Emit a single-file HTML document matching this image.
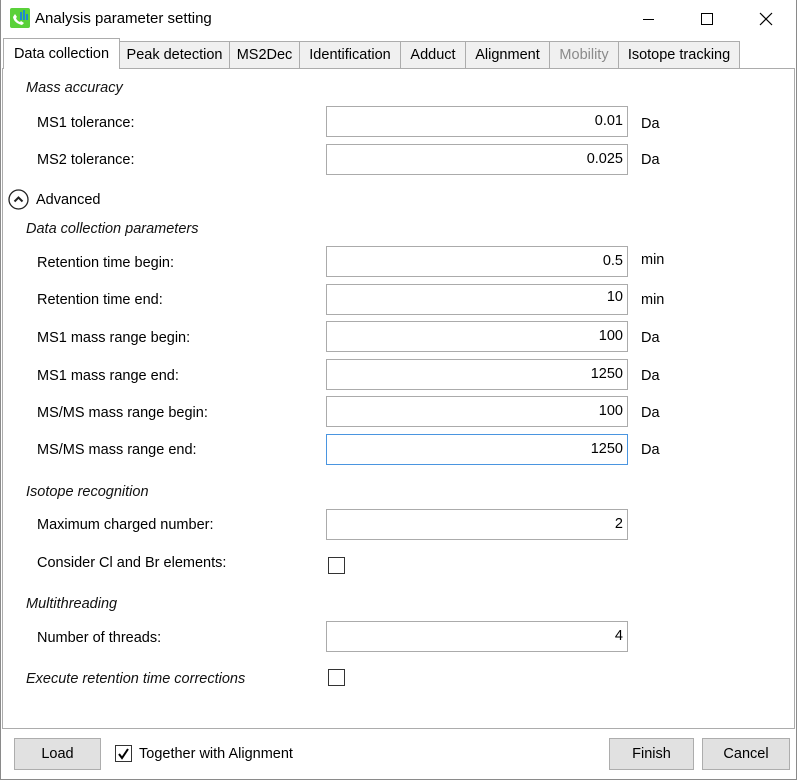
<!DOCTYPE html>
<html><head><meta charset="utf-8"><style>
*{box-sizing:border-box;margin:0;padding:0}
body{width:797px;height:780px;background:#fff;font-family:"Liberation Sans",sans-serif;font-size:14px;color:#000;position:relative;overflow:hidden}
.a{position:absolute;white-space:nowrap}
.win{position:absolute;left:0;top:0;width:797px;height:780px;border:1px solid #8a8a8a;border-top:none}
.tab{position:absolute;top:41px;height:28px;background:#f0f0f0;border:1px solid #acacac;font-size:14.5px;padding-top:5px;text-align:center}
.panel{position:absolute;left:2px;top:68px;width:793px;height:661px;border:1px solid #acacac;background:#fff}
.h{position:absolute;left:26px;font-style:italic;font-size:14.5px;color:#111}
.l{position:absolute;left:37px;font-size:14.5px}
.tb{position:absolute;left:326px;width:302px;height:31px;border:1px solid #ababab;text-align:right;padding:6px 4px 0 0;font-size:14.5px}
.u{position:absolute;left:641px;font-size:14.5px}
.cb{position:absolute;left:328px;width:17px;height:17px;border:1px solid #333}
.btn{position:absolute;top:738px;height:32px;background:#e1e1e1;border:1px solid #adadad;text-align:center;padding-top:7px;font-size:14.5px}
</style></head><body>
<div class="win"></div>
<svg class="a" style="left:10px;top:8px" width="20" height="20" viewBox="0 0 20 20"><rect width="20" height="20" rx="2" fill="#5ad13a"/><path d="M3 9 q1 6 9 8 l2-2 -3-2 -1 1 q-3-1-4-4 l1-1 -2-3z" fill="#fff"/><rect x="10" y="4" width="2" height="8" fill="#1e8ad0"/><rect x="13" y="2" width="2" height="10" fill="#1e8ad0"/><rect x="16" y="6" width="2" height="6" fill="#1e8ad0"/></svg>
<div class="a" style="left:35px;top:10px;font-size:15px">Analysis parameter setting</div>
<div class="a" style="left:643px;top:19px;width:11px;height:1px;background:#000"></div>
<div class="a" style="left:701px;top:13px;width:12px;height:12px;border:1px solid #000"></div>
<svg class="a" style="left:759px;top:12px" width="14" height="14"><path d="M1 1L13 13M13 1L1 13" stroke="#000" stroke-width="1.2"/></svg>
<div class="panel"></div>
<div class="tab" style="left:119px;width:111px">Peak detection</div>
<div class="tab" style="left:229px;width:71px">MS2Dec</div>
<div class="tab" style="left:299px;width:102px">Identification</div>
<div class="tab" style="left:400px;width:66px">Adduct</div>
<div class="tab" style="left:465px;width:85px">Alignment</div>
<div class="tab" style="left:549px;width:70px;color:#8a8a8a">Mobility</div>
<div class="tab" style="left:618px;width:122px">Isotope tracking</div>
<div class="tab" style="left:3px;top:38px;width:117px;height:31px;background:#fff;border-bottom:none;padding-top:7px">Data collection</div>

<div class="h" style="top:80px">Mass accuracy</div>
<div class="l" style="top:115px">MS1 tolerance:</div><div class="tb" style="top:106px">0.01</div><div class="u" style="top:116px">Da</div>
<div class="l" style="top:152px">MS2 tolerance:</div><div class="tb" style="top:144px">0.025</div><div class="u" style="top:152px">Da</div>
<svg class="a" style="left:8px;top:189px" width="21" height="21"><circle cx="10.5" cy="10.5" r="9.5" fill="none" stroke="#222" stroke-width="1.3"/><path d="M6.5 12.5L10.5 8.5 14.5 12.5" fill="none" stroke="#222" stroke-width="2"/></svg>
<div class="a" style="left:36px;top:192px;font-size:14.5px">Advanced</div>
<div class="h" style="top:221px">Data collection parameters</div>
<div class="l" style="top:255px">Retention time begin:</div><div class="tb" style="top:246px">0.5</div><div class="u" style="top:252px">min</div>
<div class="l" style="top:292px">Retention time end:</div><div class="tb" style="top:284px;padding-top:4px">10</div><div class="u" style="top:292px">min</div>
<div class="l" style="top:330px">MS1 mass range begin:</div><div class="tb" style="top:321px">100</div><div class="u" style="top:330px">Da</div>
<div class="l" style="top:368px">MS1 mass range end:</div><div class="tb" style="top:359px">1250</div><div class="u" style="top:368px">Da</div>
<div class="l" style="top:405px">MS/MS mass range begin:</div><div class="tb" style="top:396px">100</div><div class="u" style="top:405px">Da</div>
<div class="l" style="top:442px">MS/MS mass range end:</div><div class="tb" style="top:434px;border-color:#4a95e0">1250</div><div class="u" style="top:442px">Da</div>
<div class="h" style="top:484px">Isotope recognition</div>
<div class="l" style="top:517px">Maximum charged number:</div><div class="tb" style="top:509px">2</div>
<div class="l" style="top:555px">Consider Cl and Br elements:</div><div class="cb" style="top:557px"></div>
<div class="h" style="top:596px">Multithreading</div>
<div class="l" style="top:630px">Number of threads:</div><div class="tb" style="top:621px">4</div>
<div class="h" style="top:671px">Execute retention time corrections</div><div class="cb" style="top:669px"></div>

<div class="btn" style="left:14px;width:87px">Load</div>
<div class="a" style="left:115px;top:745px;width:17px;height:17px;border:1px solid #333"></div>
<svg class="a" style="left:117px;top:747px" width="13" height="13"><path d="M2 7L5 11 11 2" fill="none" stroke="#000" stroke-width="2"/></svg>
<div class="a" style="left:139px;top:746px;font-size:14.5px">Together with Alignment</div>
<div class="btn" style="left:609px;width:85px">Finish</div>
<div class="btn" style="left:702px;width:88px">Cancel</div>
</body></html>
